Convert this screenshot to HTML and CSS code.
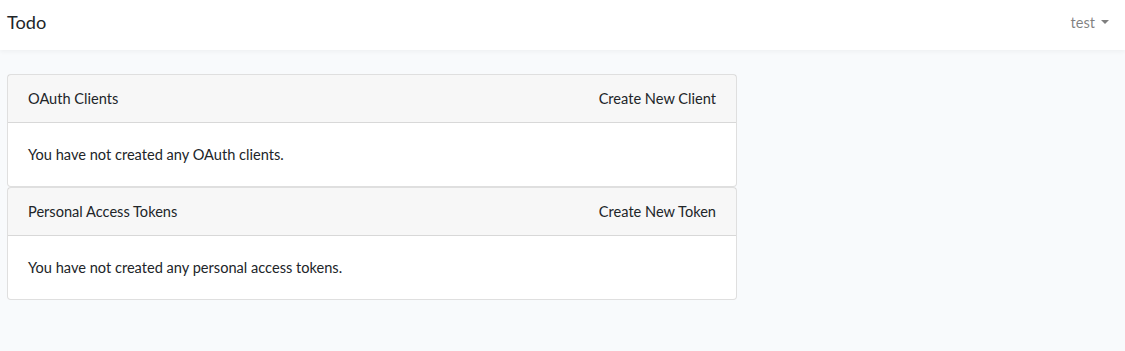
FILE: index.html
```html
<!DOCTYPE html>
<html lang="en">
<head>
<meta charset="utf-8">
<title>Todo</title>
<link rel="stylesheet" href="styles.css">
</head>
<body>
<nav class="navbar">
  <a class="brand" href="#">Todo</a>
  <a class="user" href="#">test <span class="caret"></span></a>
</nav>
<main class="main">
  <div class="card">
    <div class="card-header">
      <span>OAuth Clients</span>
      <a class="action" href="#">Create New Client</a>
    </div>
    <div class="card-body">You have not created any OAuth clients.</div>
  </div>
  <div class="card">
    <div class="card-header">
      <span>Personal Access Tokens</span>
      <a class="action" href="#">Create New Token</a>
    </div>
    <div class="card-body">You have not created any personal access tokens.</div>
  </div>
</main>
</body>
</html>
```
FILE: styles.css
```css
html, body { margin: 0; padding: 0; }
body {
  background: #f8fafc;
  font-family: Lato, "Noto Sans", sans-serif;
  font-size: 14.6px;
  line-height: 1.6;
  color: #212529;
  height: 351px;
}
a { text-decoration: none; }
.navbar {
  height: 50px;
  box-sizing: border-box;
  background: #fff;
  box-shadow: 0 2px 4px rgba(0, 0, 0, 0.04);
  display: flex;
  align-items: center;
  justify-content: space-between;
  padding: 0 16px 0 7px;
}
.brand {
  color: #212529;
  font-size: 18.2px;
  line-height: 1;
  padding-bottom: 6px;
}
.user {
  color: rgba(0, 0, 0, 0.5);
  font-size: 14.6px;
  display: flex;
  align-items: center;
  gap: 6px;
  padding-bottom: 4px;
}
.caret {
  width: 0;
  height: 0;
  border-left: 4px solid transparent;
  border-right: 4px solid transparent;
  border-top: 4.5px solid rgba(0, 0, 0, 0.5);
  margin-top: -2px;
}
.main {
  padding: 24px 0 0 7px;
}
.card {
  width: 730px;
  box-sizing: border-box;
  background: #fff;
  border: 1px solid rgba(0, 0, 0, 0.125);
  border-radius: 4px;
}
.card-header {
  background: rgba(0, 0, 0, 0.03);
  border-bottom: 1px solid rgba(0, 0, 0, 0.125);
  padding: 12px 20px;
  display: flex;
  justify-content: space-between;
  align-items: center;
  height: 48px;
  box-sizing: border-box;
}
.action { color: #212529; }
.card-body {
  padding: 20px;
  height: 63px;
  box-sizing: border-box;
}
```
